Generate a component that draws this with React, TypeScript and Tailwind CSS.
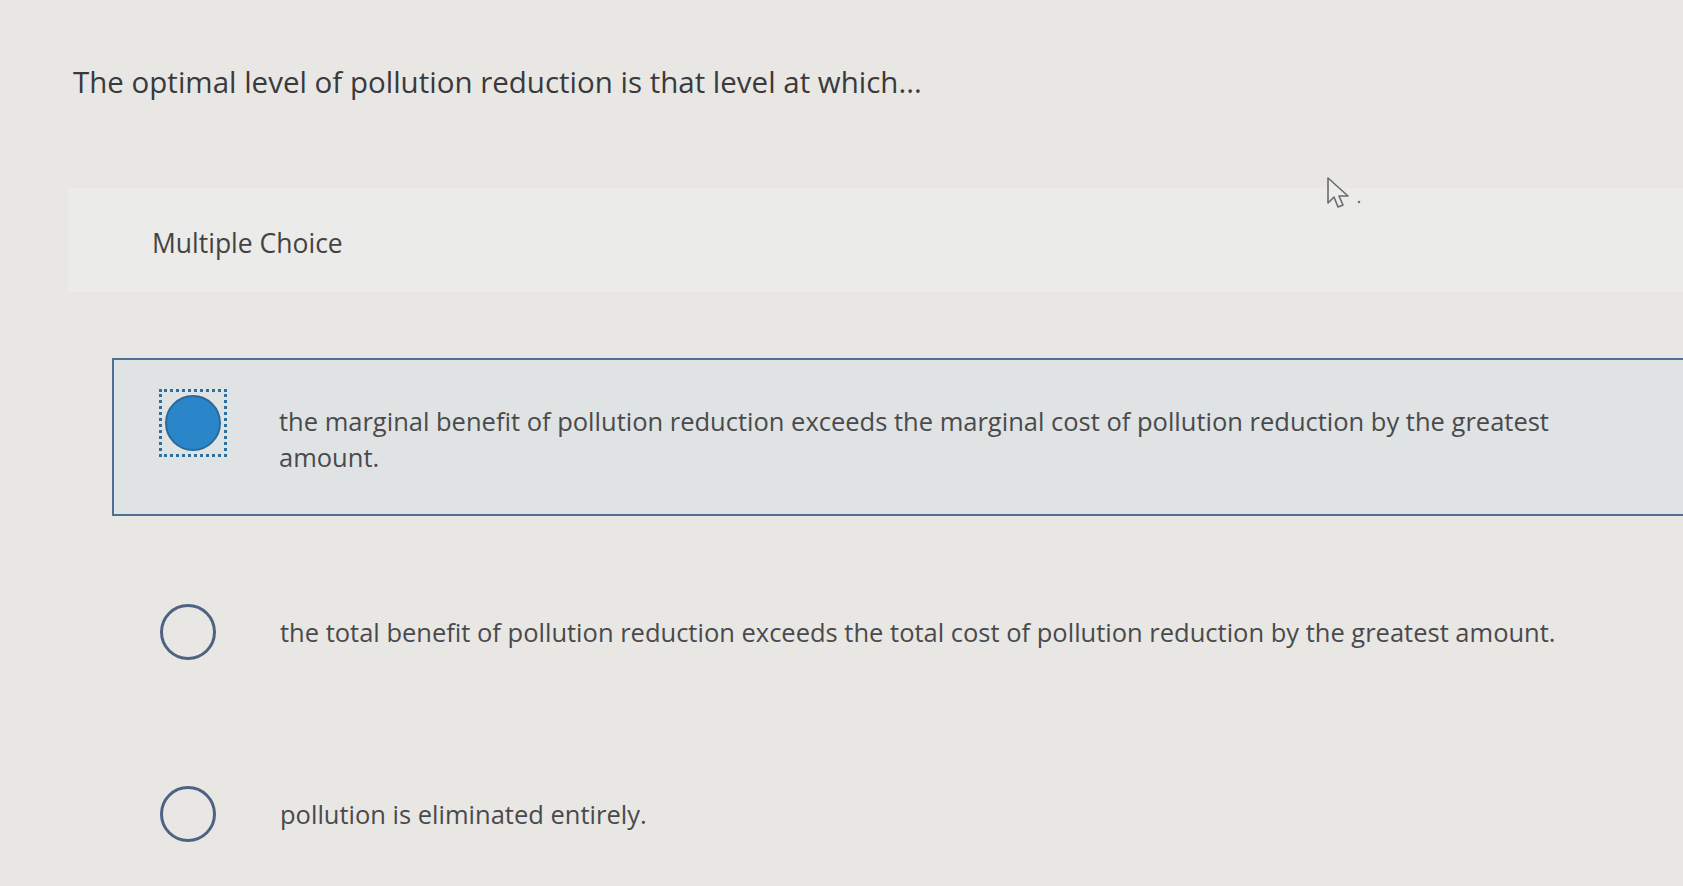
import React from "react"

const options = [
  "the marginal benefit of pollution reduction exceeds the marginal cost of pollution reduction by the greatest amount.",
  "the total benefit of pollution reduction exceeds the total cost of pollution reduction by the greatest amount.",
  "pollution is eliminated entirely.",
]

function Radio({ selected }: { selected: boolean }) {
  if (selected) {
    return (
      <div className="flex h-[68px] w-[68px] items-center justify-center border-[3px] border-dotted border-[#2f6f9c]">
        <div className="h-[56px] w-[56px] rounded-full border-2 border-[#2a6a9a] bg-[#2b86c9]" />
      </div>
    )
  }
  return <div className="h-[56px] w-[56px] rounded-full border-[3px] border-[#4d6383]" />
}

function Option({ label, selected }: { label: string; selected: boolean }) {
  return (
    <div
      className={
        selected
          ? "flex h-[158px] items-start border-2 border-r-0 border-[#4d6f94] bg-[#dfe3e4] pl-[45px] pt-[29px]"
          : "flex h-[120px] items-center pl-[48px]"
      }
    >
      <div className="flex w-[120px] shrink-0 justify-start">
        <Radio selected={selected} />
      </div>
      <p
        className={
          selected
            ? "mt-[14px] max-w-[1320px] text-[25.5px] leading-[36px] text-[#4a4a4c]"
            : "text-[25.5px] leading-[36px] text-[#4a4a4c]"
        }
      >
        {label}
      </p>
    </div>
  )
}

export default function App() {
  return (
    <div
      className="relative h-[886px] w-[1683px] overflow-hidden bg-[#e8e7e4]"
      style={{ fontFamily: "'Open Sans', Lato, sans-serif" }}
    >
      <div className="pl-[73px] pt-[62px]">
        <h1 className="text-[29.5px] leading-[40px] text-[#3a3a3c]">
          The optimal level of pollution reduction is that level at which...
        </h1>
      </div>

      <div className="ml-[68px] mt-[86px] flex h-[104px] items-center bg-[#ebebe9] pl-[84px] pt-[8px]">
        <span className="text-[26.5px] text-[#434345]">Multiple Choice</span>
      </div>

      <div className="ml-[112px] mt-[66px] flex flex-col">
        <Option label={options[0]} selected />
        <div className="h-[56px]" />
        <Option label={options[1]} selected={false} />
        <div className="h-[62px]" />
        <Option label={options[2]} selected={false} />
      </div>

      <svg
        className="absolute left-[1326px] top-[176px]"
        width="40"
        height="36"
        viewBox="0 0 40 36"
        fill="none"
      >
        <path
          d="M2 2 L2 27 L8 21 L12 31 L17 29 L13 20 L22 20 Z"
          stroke="#6b6b6b"
          strokeWidth="1.6"
          strokeLinejoin="round"
          fill="#ececea"
        />
        <circle cx="33" cy="26" r="1.3" fill="#777" />
      </svg>
    </div>
  )
}
